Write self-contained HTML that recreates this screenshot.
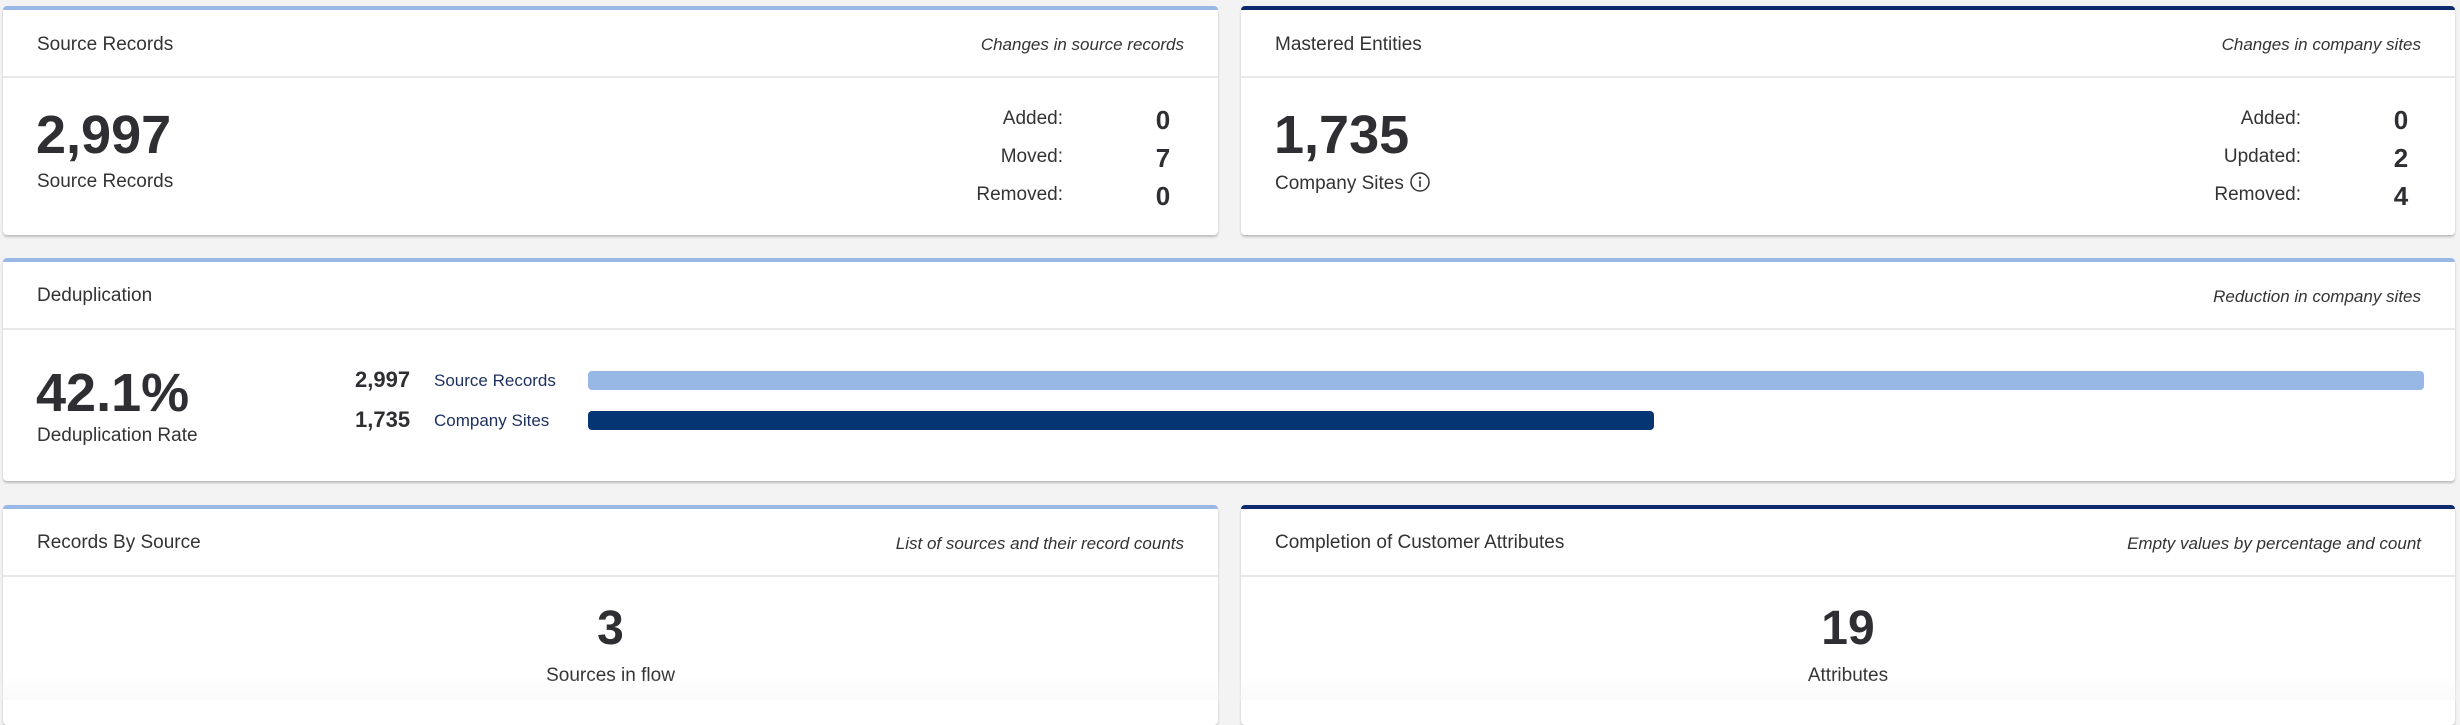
<!DOCTYPE html>
<html><head><meta charset="utf-8"><style>
*{margin:0;padding:0;box-sizing:border-box}
body{width:2460px;height:700px;background:#f3f3f3;font-family:"Liberation Sans",Arial,sans-serif;color:#333;position:relative;overflow:hidden}
.card{position:absolute;background:#fff;border-radius:4px;box-shadow:0 2px 2px rgba(0,0,0,.22);overflow:hidden}
.card .bar{position:absolute;left:0;right:0;top:0;height:4px}
.lb{background:#9ab8e6}.db{background:#0d2a6e}
.hdr{position:absolute;left:0;right:0;top:0;border-bottom:2px solid #e8e8e8}
.t{position:absolute;left:34px;font-size:19px;color:#333}
.s{position:absolute;right:34px;font-size:17px;font-style:italic;color:#333}
.big{position:absolute;font-size:54px;font-weight:bold;color:#2e2e33;letter-spacing:0}
.lbl{position:absolute;font-size:19px;color:#333}
.sl{position:absolute;font-size:19px;text-align:right;width:200px}
.sv{position:absolute;font-size:26px;font-weight:bold;width:40px;text-align:center;color:#2e2e33}
</style></head><body>

<div class="card" style="left:3px;top:6px;width:1215px;height:229px">
<div class="bar lb"></div>
<div class="hdr" style="height:72px"></div>
<div class="t" style="top:28px">Source Records</div>
<div class="s" style="top:29px">Changes in source records</div>
<div class="big" style="left:33px;top:98px">2,997</div>
<div class="lbl" style="left:34px;top:165px">Source Records</div>
<div class="sl" style="left:860px;top:102px">Added:</div><div class="sv" style="left:1140px;top:99px">0</div>
<div class="sl" style="left:860px;top:140px">Moved:</div><div class="sv" style="left:1140px;top:137px">7</div>
<div class="sl" style="left:860px;top:178px">Removed:</div><div class="sv" style="left:1140px;top:175px">0</div>
</div>

<div class="card" style="left:1241px;top:6px;width:1214px;height:229px">
<div class="bar db"></div>
<div class="hdr" style="height:72px"></div>
<div class="t" style="top:28px">Mastered Entities</div>
<div class="s" style="top:29px">Changes in company sites</div>
<div class="big" style="left:33px;top:98px">1,735</div>
<div class="lbl" style="left:34px;top:165px">Company Sites <svg width="22" height="22" viewBox="0 0 22 22" style="vertical-align:-4px"><circle cx="11" cy="11" r="9" fill="none" stroke="#333" stroke-width="1.5"/><circle cx="11" cy="6.8" r="1.2" fill="#333"/><path d="M11 9.5v6.5" stroke="#333" stroke-width="1.6"/></svg></div>
<div class="sl" style="left:860px;top:102px">Added:</div><div class="sv" style="left:1140px;top:99px">0</div>
<div class="sl" style="left:860px;top:140px">Updated:</div><div class="sv" style="left:1140px;top:137px">2</div>
<div class="sl" style="left:860px;top:178px">Removed:</div><div class="sv" style="left:1140px;top:175px">4</div>
</div>

<div class="card" style="left:3px;top:258px;width:2452px;height:223px">
<div class="bar lb"></div>
<div class="hdr" style="height:72px"></div>
<div class="t" style="top:27px">Deduplication</div>
<div class="s" style="top:29px">Reduction in company sites</div>
<div class="big" style="left:33px;top:104px">42.1%</div>
<div class="lbl" style="left:34px;top:167px">Deduplication Rate</div>
<div style="position:absolute;left:352px;top:109px;font-size:22px;font-weight:bold;color:#2e2e33">2,997</div>
<div style="position:absolute;left:431px;top:113px;font-size:17px;color:#1d2f5e">Source Records</div>
<div style="position:absolute;left:585px;top:113px;width:1836px;height:19px;background:#97b7e4;border-radius:4px"></div>
<div style="position:absolute;left:352px;top:149px;font-size:22px;font-weight:bold;color:#2e2e33">1,735</div>
<div style="position:absolute;left:431px;top:153px;font-size:17px;color:#1d2f5e">Company Sites</div>
<div style="position:absolute;left:585px;top:153px;width:1066px;height:19px;background:#063574;border-radius:4px"></div>
</div>

<div class="card" style="left:3px;top:505px;width:1215px;height:220px">
<div class="bar lb"></div>
<div class="hdr" style="height:72px"></div>
<div class="t" style="top:27px">Records By Source</div>
<div class="s" style="top:29px">List of sources and their record counts</div>
<div class="big" style="left:0;width:1215px;text-align:center;top:96px;font-size:48px">3</div>
<div class="lbl" style="left:0;width:1215px;text-align:center;top:160px">Sources in flow</div>
</div>

<div class="card" style="left:1241px;top:505px;width:1214px;height:220px">
<div class="bar db"></div>
<div class="hdr" style="height:72px"></div>
<div class="t" style="top:27px">Completion of Customer Attributes</div>
<div class="s" style="top:29px">Empty values by percentage and count</div>
<div class="big" style="left:0;width:1214px;text-align:center;top:96px;font-size:48px">19</div>
<div class="lbl" style="left:0;width:1214px;text-align:center;top:160px">Attributes</div>
</div>
<div style="position:absolute;left:0;right:0;top:675px;height:25px;background:linear-gradient(rgba(243,243,243,0),rgba(243,243,243,.4))"></div>
</body></html>
